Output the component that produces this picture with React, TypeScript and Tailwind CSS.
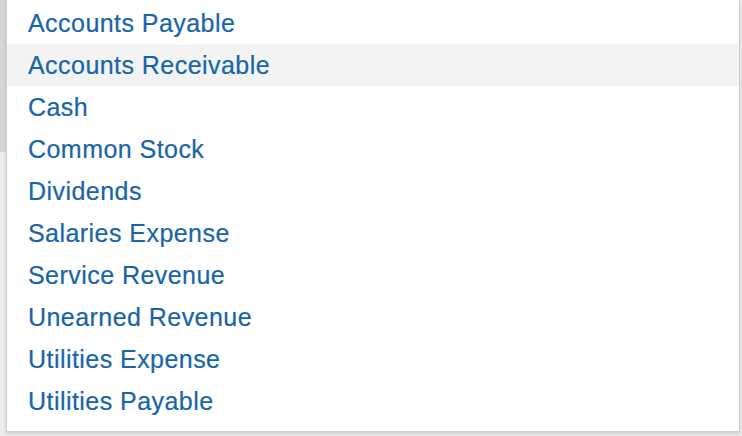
const accounts = [
  "Accounts Payable",
  "Accounts Receivable",
  "Cash",
  "Common Stock",
  "Dividends",
  "Salaries Expense",
  "Service Revenue",
  "Unearned Revenue",
  "Utilities Expense",
  "Utilities Payable",
];

export default function App() {
  return (
    <div className="flex h-[436px] w-[742px] overflow-hidden bg-[#ececec]">
      {/* whatever sits under the dropdown */}
      <div className="w-[6px] shrink-0">
        <div className="h-[152px] bg-[#d6d6d6]" />
      </div>

      {/* dropdown list */}
      <div className="flex h-[432px] w-[734px] shrink-0 flex-col border-x border-b border-[#cfcfcf] bg-white pt-[2px] shadow-[0_2px_3px_rgba(0,0,0,0.12)]">
        <ul className="font-['Liberation_Sans',Arial,sans-serif] text-[25px] tracking-[0.45px] text-[#1765a8] [-webkit-text-stroke:0.2px_#1765a8]">
          {accounts.map((name, i) => (
            <li
              key={name}
              className={
                i === 1
                  ? "h-[42px] bg-[#f3f3f3] pl-[21px] leading-[42px]"
                  : "h-[42px] pl-[21px] leading-[42px]"
              }
            >
              {name}
            </li>
          ))}
        </ul>
      </div>
    </div>
  );
}
